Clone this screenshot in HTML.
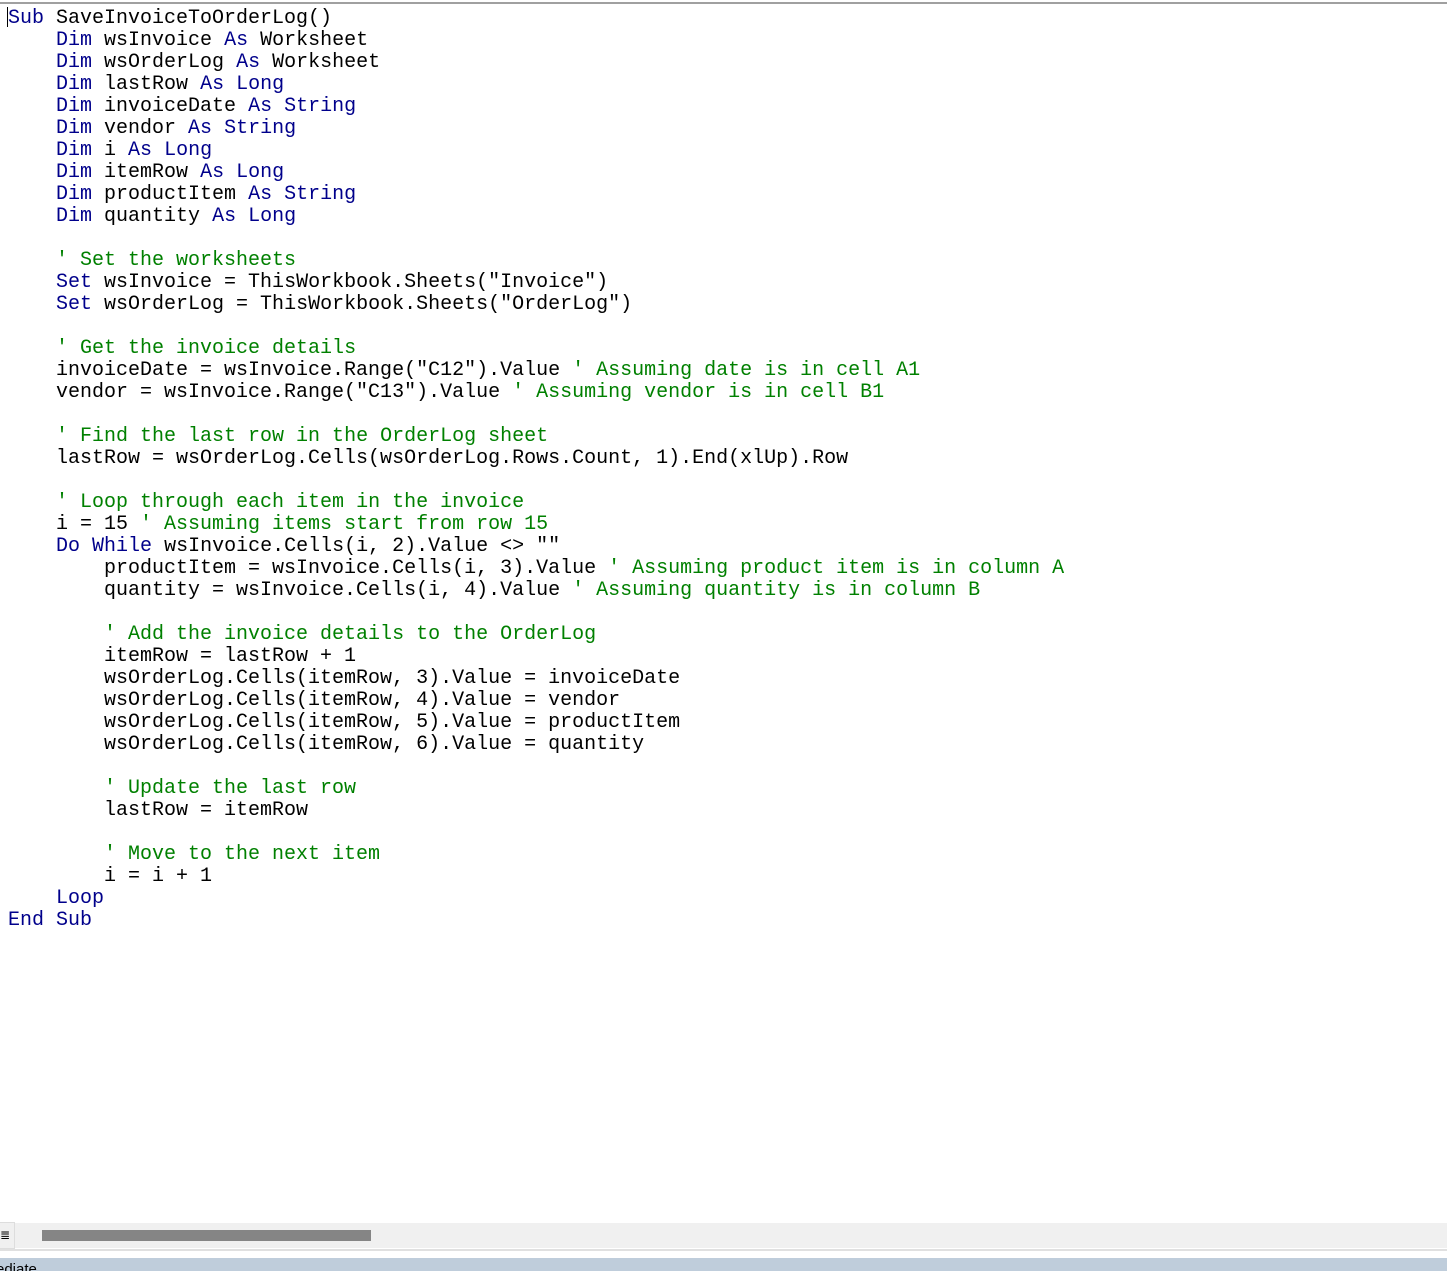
<!DOCTYPE html>
<html><head><meta charset="utf-8"><style>
html,body{margin:0;padding:0;width:1447px;height:1271px;overflow:hidden;background:#fff;position:relative}
.top{position:absolute;left:0;top:2px;width:1447px;height:2px;background:#a0a0a0}
pre{position:absolute;left:8px;top:8px;margin:0;font-family:"Liberation Mono",monospace;font-size:20px;line-height:22px;color:#000}
.k{color:#00008b}.c{color:#008000}
.caret{position:absolute;left:7px;top:7px;width:1px;height:20px;background:#000}
.sb{position:absolute;left:0;top:1223px;width:1447px;height:25px;background:#f0f0f0}
.thumb{position:absolute;left:42px;top:1230px;width:329px;height:11px;background:#858585}
.ic{position:absolute;left:0;top:1222px;width:14px;height:25px;border:1px solid #ddd;border-left:none;background:#f0f0f0;font-size:12px;line-height:25px;font-family:"DejaVu Sans",sans-serif}
.l1{position:absolute;left:0;top:1249px;width:1447px;height:2px;background:#e0e0e0}
.bar{position:absolute;left:0;top:1258px;width:1447px;height:13px;background:#bfcddb;overflow:hidden}
.bar span{position:absolute;left:-4px;top:3px;font-family:"Liberation Sans",sans-serif;font-size:15px}
</style></head><body>
<div class="top"></div>
<div class="caret"></div>
<pre><span class="k">Sub</span> SaveInvoiceToOrderLog()
    <span class="k">Dim</span> wsInvoice <span class="k">As</span> Worksheet
    <span class="k">Dim</span> wsOrderLog <span class="k">As</span> Worksheet
    <span class="k">Dim</span> lastRow <span class="k">As</span> <span class="k">Long</span>
    <span class="k">Dim</span> invoiceDate <span class="k">As</span> <span class="k">String</span>
    <span class="k">Dim</span> vendor <span class="k">As</span> <span class="k">String</span>
    <span class="k">Dim</span> i <span class="k">As</span> <span class="k">Long</span>
    <span class="k">Dim</span> itemRow <span class="k">As</span> <span class="k">Long</span>
    <span class="k">Dim</span> productItem <span class="k">As</span> <span class="k">String</span>
    <span class="k">Dim</span> quantity <span class="k">As</span> <span class="k">Long</span>

    <span class="c">' Set the worksheets</span>
    <span class="k">Set</span> wsInvoice = ThisWorkbook.Sheets("Invoice")
    <span class="k">Set</span> wsOrderLog = ThisWorkbook.Sheets("OrderLog")

    <span class="c">' Get the invoice details</span>
    invoiceDate = wsInvoice.Range("C12").Value <span class="c">' Assuming date is in cell A1</span>
    vendor = wsInvoice.Range("C13").Value <span class="c">' Assuming vendor is in cell B1</span>

    <span class="c">' Find the last row in the OrderLog sheet</span>
    lastRow = wsOrderLog.Cells(wsOrderLog.Rows.Count, 1).End(xlUp).Row

    <span class="c">' Loop through each item in the invoice</span>
    i = 15 <span class="c">' Assuming items start from row 15</span>
    <span class="k">Do</span> <span class="k">While</span> wsInvoice.Cells(i, 2).Value &lt;&gt; ""
        productItem = wsInvoice.Cells(i, 3).Value <span class="c">' Assuming product item is in column A</span>
        quantity = wsInvoice.Cells(i, 4).Value <span class="c">' Assuming quantity is in column B</span>

        <span class="c">' Add the invoice details to the OrderLog</span>
        itemRow = lastRow + 1
        wsOrderLog.Cells(itemRow, 3).Value = invoiceDate
        wsOrderLog.Cells(itemRow, 4).Value = vendor
        wsOrderLog.Cells(itemRow, 5).Value = productItem
        wsOrderLog.Cells(itemRow, 6).Value = quantity

        <span class="c">' Update the last row</span>
        lastRow = itemRow

        <span class="c">' Move to the next item</span>
        i = i + 1
    <span class="k">Loop</span>
<span class="k">End</span> <span class="k">Sub</span></pre>
<div class="sb"></div>
<div class="ic">≣</div>
<div class="thumb"></div>
<div class="l1"></div>
<div class="bar"><span>ediate</span></div>
</body></html>
